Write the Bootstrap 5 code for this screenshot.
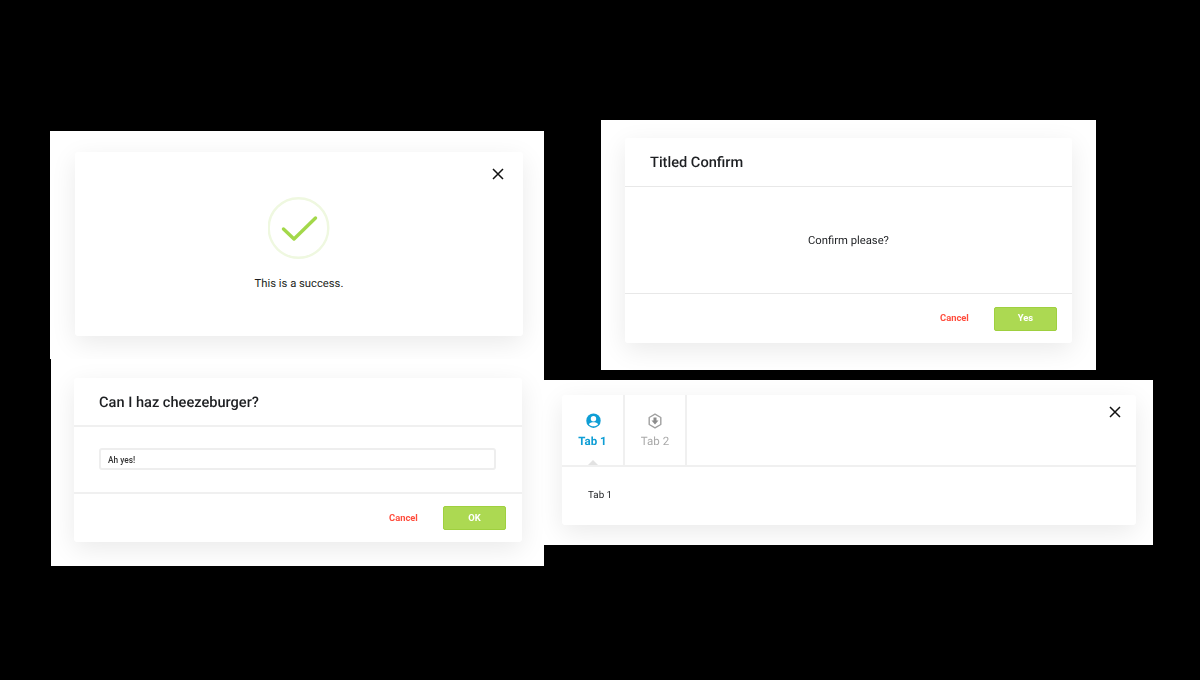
<!DOCTYPE html>
<html lang="en">
<head>
  <meta charset="UTF-8" />
  <title>Dialogs</title>
  <link href="https://cdn.jsdelivr.net/npm/bootstrap@5.3.0/dist/css/bootstrap.min.css" rel="stylesheet" />
  <style>
    html, body { height: 100%; }
    body {
      background: #000;
      font-family: Roboto, "Liberation Sans", sans-serif;
      color: #1d1f22;
      overflow: hidden;
      text-rendering: geometricPrecision;
    }
    .stage { position: relative; width: 1200px; height: 680px; will-change: opacity; }

    /* each white sheet sits at its own place on the black canvas */
    .sheet { position: absolute; background: #fff; }
    .sheet-success { left: 50px; top: 131px; width: 494px; height: 228px; padding: 21px 21px 0 25px; }
    .sheet-confirm { left: 601px; top: 120px; width: 495px; height: 250px; padding: 18px 24px 0 24px; }
    .sheet-prompt { left: 51px; top: 359px; width: 493px; height: 207px; padding: 19px 22px 0 23px; }
    .sheet-tabs { left: 544px; top: 380px; width: 609px; height: 165px; padding: 15px 17px 0 18px; }

    .dlg {
      position: relative;
      background: #fff;
      border-radius: 3px;
      box-shadow: 0 7px 26px rgba(0, 0, 0, .085);
    }
    .dlg-success { height: 184px; padding-top: 45px; }
    .dlg-confirm { height: 205px; }
    .dlg-prompt { height: 164px; }
    .dlg-tabs { height: 130px; }

    .dlg-close {
      position: absolute;
      width: 14px;
      height: 14px;
      padding: 0;
      border: 0;
      background: none;
      display: flex;
    }
    .dlg-success .dlg-close { top: 15px; right: 18px; }
    .dlg-tabs .dlg-close { top: 10px; right: 14px; }

    .msg { font-size: 11.25px; line-height: 14px; }
    .dlg-success .msg { padding-top: 2px; }
    .ring { width: 62px; height: 62px; display: block; }

    .dlg-head {
      padding: 0 25px;
      font-size: 14.6px;
      font-weight: 500;
      line-height: 20px;
      display: flex;
      align-items: center;
      border-bottom: 2px solid #f0f0f0;
    }
    .dlg-confirm .dlg-head { height: 49px; border-bottom-width: 1px; border-color: #e8e8e8; }
    .dlg-prompt .dlg-head { height: 49px; }

    .dlg-body-confirm { height: 106px; padding-top: 2px; }
    .dlg-foot { gap: 26px; padding-right: 15px; }
    .dlg-confirm .dlg-foot { height: 50px; border-top: 1px solid #e8e8e8; }
    .dlg-prompt .dlg-foot { height: 50px; border-top: 2px solid #f0f0f0; padding-right: 16px; }

    .btn-cancel {
      padding: 0;
      border: 0;
      background: none;
      color: #ff4d3d;
      font-size: 9.4px;
      font-weight: 700;
      width: 28px;
      text-align: center;
    }
    .btn-go {
      width: 63px;
      height: 24px;
      padding: 0;
      border: 1px solid #9fd03f;
      border-radius: 2px;
      background: #acd952;
      color: #fff;
      font-size: 9.4px;
      font-weight: 700;
    }

    .dlg-body-prompt { height: 65px; padding: 21px 26px 0 25px; }
    .prompt-input {
      height: 22px;
      padding: 1px 7px 0;
      border: 2px solid #eee;
      border-radius: 3px;
      font-size: 8.3px;
      font-weight: 500;
      color: #333;
    }
    .prompt-input:focus { border-color: #eee; box-shadow: none; }

    .tab-row { height: 72px; border-bottom: 2px solid #f0f0f0; }
    .tab-item {
      position: relative;
      width: 62px;
      padding-top: 18px;
      border-right: 2px solid #f0f0f0;
      color: #a9a9a9;
      font-size: 11.5px;
      line-height: 14px;
      text-align: center;
    }
    .tab-item svg { display: block; margin: 0 auto 5px; width: 16px; height: 16px; }
    .tab-item.is-active { width: 63px; color: #0f9ed5; font-weight: 700; }
    .tab-item.is-active::after {
      content: "";
      position: absolute;
      left: 26px;
      bottom: 0;
      border: 5px solid transparent;
      border-top: 0;
      border-bottom-color: #e2e2e2;
    }
    .tab-text { padding: 22px 26px; font-size: 9.8px; line-height: 14px; }
  </style>
</head>
<body>
<div class="stage">

  <section class="sheet sheet-success">
    <div class="dlg dlg-success text-center">
      <button class="dlg-close" type="button" aria-label="Close">
        <svg viewBox="0 0 14 14" width="14" height="14" fill="none" stroke="#111" stroke-width="1.5"><path d="M2 2l10 10M12 2L2 12"/></svg>
      </button>
      <div class="d-flex justify-content-center mb-3">
        <svg class="ring" viewBox="0 0 62 62" fill="none">
          <circle cx="30.500" cy="31" r="29.800" stroke="#eff8e0" stroke-width="2.400"/>
          <path d="M15.500 32L26 42L47.500 21" stroke="#a3d84a" stroke-width="3.400" stroke-linecap="round" stroke-linejoin="round"/>
        </svg>
      </div>
      <div class="msg">This is a success.</div>
    </div>
  </section>

  <section class="sheet sheet-confirm">
    <div class="dlg dlg-confirm">
      <div class="dlg-head">Titled Confirm</div>
      <div class="dlg-body-confirm msg d-flex align-items-center justify-content-center">Confirm please?</div>
      <div class="dlg-foot d-flex align-items-center justify-content-end">
        <button class="btn-cancel" type="button">Cancel</button>
        <button class="btn-go" type="button">Yes</button>
      </div>
    </div>
  </section>

  <section class="sheet sheet-prompt">
    <div class="dlg dlg-prompt">
      <div class="dlg-head">Can I haz cheezeburger?</div>
      <div class="dlg-body-prompt">
        <input class="form-control prompt-input" type="text" value="Ah yes!" />
      </div>
      <div class="dlg-foot d-flex align-items-center justify-content-end">
        <button class="btn-cancel" type="button">Cancel</button>
        <button class="btn-go" type="button">OK</button>
      </div>
    </div>
  </section>

  <section class="sheet sheet-tabs">
    <div class="dlg dlg-tabs">
      <button class="dlg-close" type="button" aria-label="Close">
        <svg viewBox="0 0 14 14" width="14" height="14" fill="none" stroke="#111" stroke-width="1.5"><path d="M2 2l10 10M12 2L2 12"/></svg>
      </button>
      <div class="tab-row d-flex">
        <div class="tab-item is-active">
          <svg viewBox="0 0 16 16">
            <circle cx="8.500" cy="7.700" r="7.200" fill="#0f9ed5"/>
            <circle cx="8.500" cy="5.800" r="2.700" fill="#fff"/>
            <path d="M3.900 11.200C4.700 9.600 6.500 9.200 8.500 9.200s3.800 .4 4.600 2C12 12.600 10.400 13.200 8.500 13.200s-3.500-.6-4.600-2z" fill="#fff"/>
          </svg>
          Tab 1
        </div>
        <div class="tab-item">
          <svg viewBox="0 0 16 16" fill="none">
            <path d="M8 1.200l5.800 3.300v7L8 14.800l-5.800-3.300v-7z" stroke="#a0a0a0" stroke-width="1.400" stroke-linejoin="round"/>
            <path d="M6.500 4.600h3v3h2L8 11.400 4.500 7.600h2z" fill="#8c8c8c"/>
          </svg>
          Tab 2
        </div>
      </div>
      <div class="tab-text">Tab 1</div>
    </div>
  </section>

</div>
<script src="https://cdn.jsdelivr.net/npm/bootstrap@5.3.0/dist/js/bootstrap.bundle.min.js"></script>
</body>
</html>
